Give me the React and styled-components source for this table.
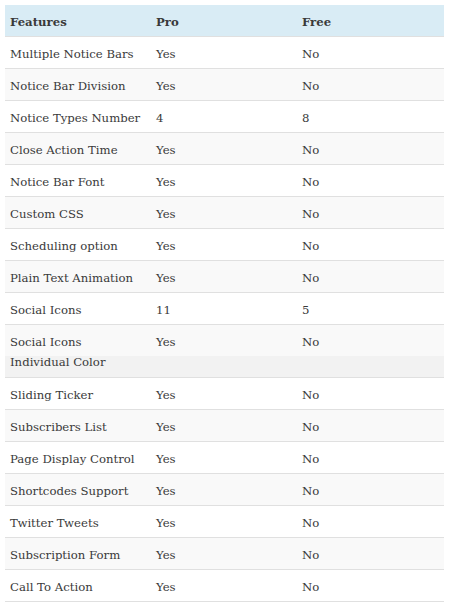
import styled, { createGlobalStyle } from "styled-components"

const Global = createGlobalStyle`
    body {
        margin: 0;
        background: #fff;
        font-family: "DejaVu Serif", "Liberation Serif", serif;
    }
`

const Wrap = styled.div`
    padding: 5px 7px 0 5px;
`

const Table = styled.div`
    display: grid;
    grid-template-columns: 146px 146px 1fr;
    color: #3a3a3a;
    font-size: 11.7px;
`

const Row = styled.div`
    display: contents;
`

const Cell = styled.div`
    box-sizing: border-box;
    height: ${p => p.tall ? "53px" : "32px"};
    padding: ${p => p.tall ? "7px 5px 0" : "3px 5px 0"};
    display: flex;
    flex-direction: column;
    justify-content: ${p => p.tall ? "flex-start" : "center"};
    line-height: 20px;
    background: ${p => p.head ? "#d9ecf5" : p.striped ? "#f9f9f9" : "#fff"};
    ${p => p.tall && "background: linear-gradient(#f9f9f9 0 31px, #f2f2f2 31px);"}
    font-weight: ${p => p.head ? 700 : 400};
    border-bottom: 1px solid #e0e0e0;
`

const rows = [
    ["Multiple Notice Bars", "Yes", "No"],
    ["Notice Bar Division", "Yes", "No"],
    ["Notice Types Number", "4", "8"],
    ["Close Action Time", "Yes", "No"],
    ["Notice Bar Font", "Yes", "No"],
    ["Custom CSS", "Yes", "No"],
    ["Scheduling option", "Yes", "No"],
    ["Plain Text Animation", "Yes", "No"],
    ["Social Icons", "11", "5"],
    [["Social Icons", "Individual Color"], "Yes", "No"],
    ["Sliding Ticker", "Yes", "No"],
    ["Subscribers List", "Yes", "No"],
    ["Page Display Control", "Yes", "No"],
    ["Shortcodes Support", "Yes", "No"],
    ["Twitter Tweets", "Yes", "No"],
    ["Subscription Form", "Yes", "No"],
    ["Call To Action", "Yes", "No"],
]

function App() {
    return (
        <>
            <Global />
            <Wrap>
                <Table>
                    <Row>
                        <Cell head>Features</Cell>
                        <Cell head>Pro</Cell>
                        <Cell head>Free</Cell>
                    </Row>
                    {rows.map((r, i) => {
                        const tall = Array.isArray(r[0])
                        const striped = i % 2 === 1
                        return (
                            <Row key={i}>
                                {r.map((c, j) => (
                                    <Cell key={j} striped={striped} tall={tall}>
                                        {Array.isArray(c) ? c.map(t => <span key={t}>{t}</span>) : c}
                                    </Cell>
                                ))}
                            </Row>
                        )
                    })}
                </Table>
            </Wrap>
        </>
    )
}

export default App
